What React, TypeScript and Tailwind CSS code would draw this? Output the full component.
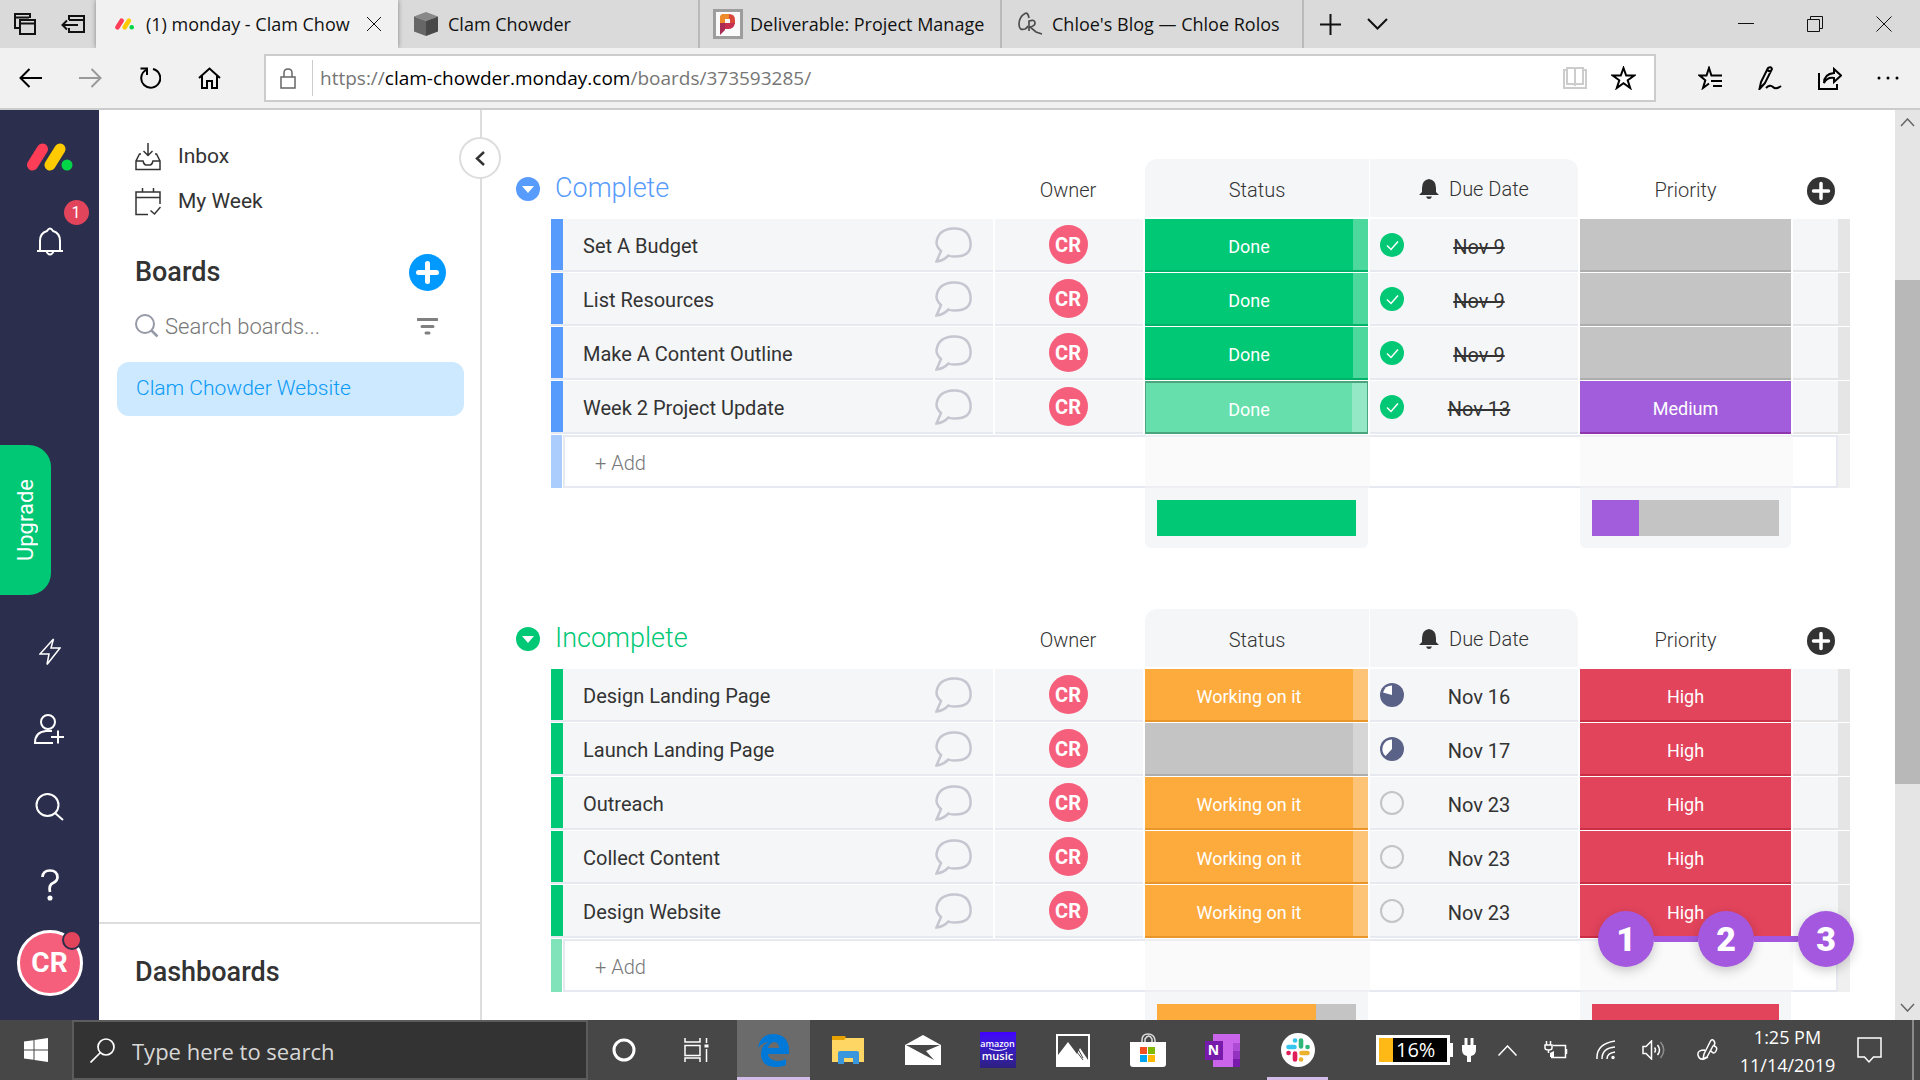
import React, { useState } from 'react'

interface Item {
  name: string
  status: string
  due: string
  progress: 'done' | 'late' | 'mid' | 'empty'
  priority: string
  selected?: boolean
}

interface Slice {
  color: string
  share: number
}

interface Group {
  title: string
  text: string
  strip: string
  fade: string
  items: Item[]
  statusBar: Slice[]
  priorityBar: Slice[]
}

const GROUPS: Group[] = [
  {
    title: 'Complete',
    text: 'text-[#579bfc]',
    strip: 'bg-[#579bfc]',
    fade: 'bg-[#abcdfd]',
    items: [
      { name: 'Set A Budget', status: 'Done', due: 'Nov 9', progress: 'done', priority: '' },
      { name: 'List Resources', status: 'Done', due: 'Nov 9', progress: 'done', priority: '' },
      { name: 'Make A Content Outline', status: 'Done', due: 'Nov 9', progress: 'done', priority: '' },
      { name: 'Week 2 Project Update', status: 'Done', due: 'Nov 13', progress: 'done', priority: 'Medium', selected: true },
    ],
    statusBar: [{ color: 'bg-[#00c875]', share: 100 }],
    priorityBar: [{ color: 'bg-[#a25ddc]', share: 25 }, { color: 'bg-[#c4c4c4]', share: 75 }],
  },
  {
    title: 'Incomplete',
    text: 'text-[#00c875]',
    strip: 'bg-[#00c875]',
    fade: 'bg-[#80e3ba]',
    items: [
      { name: 'Design Landing Page', status: 'Working on it', due: 'Nov 16', progress: 'late', priority: 'High' },
      { name: 'Launch Landing Page', status: '', due: 'Nov 17', progress: 'mid', priority: 'High' },
      { name: 'Outreach', status: 'Working on it', due: 'Nov 23', progress: 'empty', priority: 'High' },
      { name: 'Collect Content', status: 'Working on it', due: 'Nov 23', progress: 'empty', priority: 'High' },
      { name: 'Design Website', status: 'Working on it', due: 'Nov 23', progress: 'empty', priority: 'High' },
    ],
    statusBar: [{ color: 'bg-[#fdab3d]', share: 80 }, { color: 'bg-[#c4c4c4]', share: 20 }],
    priorityBar: [{ color: 'bg-[#e2445c]', share: 100 }],
  },
]

const CELL_COLORS: Record<string, string> = {
  Done: 'bg-[#00c875] border-[#00b368]',
  'Working on it': 'bg-[#fdab3d] border-[#e8962a]',
  High: 'bg-[#e2445c] border-[#cb2d45]',
  Medium: 'bg-[#a25ddc] border-[#8f35ae]',
  '': 'bg-[#c4c4c4] border-[#adadad]',
}

interface IconProps {
  w: number
  h: number
  sw?: number
  className?: string
  children: React.ReactNode
}

/* Line icon drawn on a grid of its own pixel size */
const Icon: React.FC<IconProps> = ({ w, h, sw = 2, className = '', children }) => (
  <svg width={w} height={h} viewBox={`0 0 ${w} ${h}`} fill="none" stroke="currentColor" strokeWidth={sw} className={`shrink-0 ${className}`} aria-hidden="true">
    {children}
  </svg>
)

const MondayMark: React.FC<{ w: number; h: number }> = ({ w, h }) => (
  <svg width={w} height={h} viewBox="0 0 46 28" className="shrink-0" aria-hidden="true">
    <path d="M6 22 16 6" stroke="#ff3d57" strokeWidth="11" strokeLinecap="round" />
    <path d="M23.500 22 33.500 6" stroke="#ffcb00" strokeWidth="11" strokeLinecap="round" />
    <circle cx="40.500" cy="22" r="5.500" fill="#00d647" />
  </svg>
)

/* ---------- Browser ---------- */

interface TabProps {
  title: string
  active?: boolean
  children: React.ReactNode
}

const Tab: React.FC<TabProps> = ({ title, active, children }) => (
  <div className={`flex items-center w-[302px] h-12 pl-3 ${active ? 'bg-[#f1f1f1] pr-4 shadow-[0_0_5px_rgba(0,0,0,0.4)]' : 'border-r-2 border-[#b9b9b9] pr-3'}`}>
    <span className="flex justify-center w-8 mr-1.5">{children}</span>
    <span className="flex-1 overflow-hidden whitespace-nowrap text-lg">{title}</span>
    {active && (
      <button aria-label="Close tab" className="pl-3">
        <Icon w={16} h={20} sw={1}><path d="M1 3l14 14M15 3L1 17" /></Icon>
      </button>
    )}
  </div>
)

const TabBar: React.FC = () => (
  <div className="flex h-12 items-center bg-[#dadada] text-[#111] overflow-hidden">
    <div className="flex items-center w-24 shrink-0 pl-[14px] gap-6">
      <button aria-label="Tabs you've set aside">
        <Icon w={23} h={23}>
          <path d="M5 15H1V1h15v4M1 4.500h14" />
          <path d="M6 7h15v14H6zM6 10.500h15" />
        </Icon>
      </button>
      <button aria-label="Set these tabs aside">
        <Icon w={24} h={20}>
          <path d="M8 6V2h15v16H8v-4M8 6h15" />
          <path d="M17 11H2M6 6.500 1.500 11 6 15.500" />
        </Icon>
      </button>
    </div>
    <Tab title="(1) monday - Clam Chow" active><MondayMark w={19} h={12} /></Tab>
    <Tab title="Clam Chowder">
      <svg width="24" height="24" viewBox="0 0 24 24" aria-hidden="true">
        <path d="M12 0 24 4.500 12 9 0 4.500z" fill="#888" />
        <path d="M0 4.500 12 9v15L0 19.500z" fill="#666" />
        <path d="M24 4.500 12 9v15l12-4.500z" fill="#484848" />
      </svg>
    </Tab>
    <Tab title="Deliverable: Project Manage">
      <svg width="30" height="30" viewBox="0 0 30 30" aria-hidden="true">
        <path d="M1.500 1.500h27v27h-27z" fill="#fafafa" stroke="#9d9d9d" strokeWidth="3" />
        <path d="M9 5h7v5h-4v4H7V7z" fill="#ee8c2c" />
        <path d="M16 5q6 0 6 6v4h-5v-5h-1z" fill="#d9473a" />
        <path d="M12 14h10q-1 6-7 6h-3z" fill="#c62f50" />
        <path d="M7 14h5v7l-5 5z" fill="#a92b53" />
      </svg>
    </Tab>
    <Tab title="Chloe's Blog — Chloe Rolos">
      <Icon w={25} h={25} sw={1.7} className="text-[#4d4d4d]">
        <path d="M11 6Q10 0 7 1.500 1 5 1 12t6 5q2-1 3-3" />
        <path d="M11 19V9q6-2 6 2 0 3-5 4l6 5 6 2" />
      </Icon>
    </Tab>
    <button aria-label="New tab" className="ml-4">
      <Icon w={21} h={21}><path d="M10.500 0v21M0 10.500h21" /></Icon>
    </button>
    <button aria-label="Tab previews" className="ml-[26px]">
      <Icon w={21} h={12}><path d="M1 1l9.500 9.500L20 1" /></Icon>
    </button>
    <div className="flex items-center gap-[53px] ml-auto pr-7">
      <button aria-label="Minimize"><Icon w={16} h={2} sw={1}><path d="M0 .5h16" /></Icon></button>
      <button aria-label="Restore"><Icon w={16} h={16} sw={1}><path d="M.5 3.500h12v12H.5zM3.500 3V.5h12v12h-3" /></Icon></button>
      <button aria-label="Close"><Icon w={16} h={16} sw={1}><path d="M.5.5l15 15M15.500.5l-15 15" /></Icon></button>
    </div>
  </div>
)

const AddressBar: React.FC = () => (
  <div className="flex items-center h-[62px] bg-[#f1f1f1] border-b-2 border-[#ccc] text-black">
    <div className="flex items-center shrink-0 w-[264px] pl-[19px] gap-[37px]">
      <button aria-label="Back"><Icon w={23} h={20}><path d="M23 10H1.500M10.500 1 1.500 10l9 9" /></Icon></button>
      <button aria-label="Forward" className="text-[#999]"><Icon w={23} h={20}><path d="M0 10h21.500M12.500 1l9 9-9 9" /></Icon></button>
      <button aria-label="Refresh"><Icon w={22} h={22}><path d="M14 2a9.500 9.500 0 1 1-7 1M1.500 1.500H8V8" /></Icon></button>
      <button aria-label="Home"><Icon w={23} h={22}><path d="M1 11 11.500 1.500 22 11M4 9v12h5v-7h5v7h5V9" /></Icon></button>
    </div>
    <div className="flex flex-1 items-center h-12 bg-white border-2 border-[#ccc]">
      <Icon w={16} h={21} sw={1.500} className="ml-[14px] text-[#666]"><path d="M1 9h14v11H1zM4 9V5q0-4 4-4t4 4v4" /></Icon>
      <span className="w-px h-9 mx-[7px] ml-4 bg-[#ccc]" />
      <a href="#board" className="flex-1 text-[19px] text-[#767676]">
        https://<span className="text-black">clam-chowder.monday.com</span>/boards/373593285/
      </a>
      <button aria-label="Reading view" className="text-[#ccc]">
        <Icon w={24} h={22}><path d="M4 3H1v18h22V3h-3M4 1h7l1 1 1-1h7v16h-7l-1 1-1-1H4zM12 2v16" /></Icon>
      </button>
      <button aria-label="Add to favorites" className="ml-6 mr-[18px]">
        <Icon w={25} h={24}><path d="M12.500 2l2.700 7.600h8l-6.500 4.700 2.500 7.700-6.700-4.800L5.800 22l2.500-7.700L1.800 9.600h8z" /></Icon>
      </button>
    </div>
    <div className="flex items-center shrink-0 w-[264px] pl-[42px] gap-[35px]">
      <button aria-label="Favorites">
        <Icon w={25} h={24}><path d="M17 9.600h-3.600L11 2 8.500 9.600H1.800l5.500 4.700L5 22l6-4.500M14 9.600h10M13 15h11M15 20h9" /></Icon>
      </button>
      <button aria-label="Notes">
        <Icon w={25} h={24}><path d="M1.500 23 3 16 10 2q3-2 4 1L7 17zM9 4l4 2M1.500 23 7 17M8 22q4-4 7-1t8-1" /></Icon>
      </button>
      <button aria-label="Share">
        <Icon w={24} h={23}><path d="M1 6v16h18v-5M16 2l7 6.500-7 6.500v-4q-7-1-10 5 0-9 10-10z" /></Icon>
      </button>
      <button aria-label="Settings and more">
        <Icon w={22} h={4} className="fill-current stroke-none"><circle cx="2" cy="2" r="1.500" /><circle cx="11" cy="2" r="1.500" /><circle cx="20" cy="2" r="1.500" /></Icon>
      </button>
    </div>
  </div>
)

/* ---------- monday.com side panels ---------- */

const Rail: React.FC = () => (
  <nav className="relative flex flex-col items-center shrink-0 w-[99px] pt-[33px] pb-6 bg-[#2b2e4c] text-white">
    <MondayMark w={47} h={28} />
    <button aria-label="Notifications" className="relative mt-14">
      <Icon w={28} h={29}><path d="M1 24h26M4 24V14Q4 6 11 4q3-5 6 0 7 2 7 10v10M10.500 25q3.500 5 7 0" /></Icon>
      <span className="absolute left-7 -top-[27px] w-[25px] h-[25px] rounded-full bg-[#e2445c] text-base leading-[26px] text-center">1</span>
    </button>
    <button className="absolute left-0 top-[335px] flex items-center justify-center w-[51px] h-[150px] rounded-r-[22px] bg-[#00c875]">
      <span className="[writing-mode:vertical-rl] rotate-180 text-[22px]">Upgrade</span>
    </button>
    <div className="flex flex-col items-center mt-auto">
      <button aria-label="What's new"><Icon w={22} h={28} sw={1.500}><path d="M14.500 1 1 16h9L8 26.500 21 10h-9z" /></Icon></button>
      <button aria-label="Invite members" className="mt-12">
        <Icon w={31} h={31}><circle cx="14" cy="8" r="7" /><path d="M19 29H1q0-11 11-12h6M17 23h13M24 16.500v13" /></Icon>
      </button>
      <button aria-label="Search" className="mt-12"><Icon w={29} h={28}><circle cx="12.500" cy="12" r="11" /><path d="M20 20l8 7" /></Icon></button>
      <button aria-label="Help" className="mt-12">
        <Icon w={18} h={32} sw={2.700}><path d="M1.500 8Q2 1.500 9 1.500t7.500 6.500Q16.500 12 12 14t-3 9" /><circle cx="9" cy="29" r="1.200" /></Icon>
      </button>
      <button aria-label="Profile" className="relative mt-[29px] w-[66px] h-[66px] rounded-full border-[3px] border-white bg-[#f65f7c] text-[28px] font-bold">
        CR
        <span className="absolute -top-[3px] -right-[2px] w-5 h-5 rounded-full border-2 border-[#2b2e4c] bg-[#e2445c]" />
      </button>
    </div>
  </nav>
)

const SideBar: React.FC = () => (
  <aside className="relative flex flex-col shrink-0 w-[383px] bg-white border-r-2 border-[#ddd] text-[#333]">
    <div className="flex flex-col pl-9 pt-6 text-[21px]">
      <a href="#inbox" className="flex items-center h-[45px] gap-[17px]">
        <Icon w={26} h={28} sw={1.500}>
          <path d="M6 11H4.500L1 18v8.500h24V18l-3.500-7H20M1 18h7q1 4 3 4h4q2 0 3-4h7M13 0v12M8.500 8l4.500 4.500L17.500 8" />
        </Icon>
        Inbox
      </a>
      <a href="#week" className="flex items-center h-[45px] gap-[17px]">
        <Icon w={26} h={28} sw={1.500}>
          <path d="M13 26.500H1V4h24v12M1 9.500h24M7.500 0v4M18.500 0v4M15.500 22.500l4 3.500 6-7" />
        </Icon>
        My Week
      </a>
    </div>
    <div className="flex items-center justify-between h-10 mt-[28px] pl-9 pr-[34px]">
      <h2 className="text-[27px] font-medium">Boards</h2>
      <button aria-label="Add board" className="text-white">
        <Icon w={37} h={37} sw={5}><circle cx="18.500" cy="18.500" r="18.500" fill="#09f" stroke="none" /><path d="M18.500 9.500v18M9.500 18.500h18" strokeLinecap="round" /></Icon>
      </button>
    </div>
    <label className="flex items-center h-9 mt-4 pl-9 pr-[42px]">
      <Icon w={24} h={24} className="mr-1.5 text-[#9699a6]"><circle cx="10" cy="10" r="9" /><path d="M16 16l6.500 6.500" strokeWidth="2.500" /></Icon>
      <input type="text" aria-label="Search boards" placeholder="Search boards..." className="flex-1 min-w-0 text-[22px] font-light placeholder:text-[#777] outline-none" />
      <Icon w={21} h={17} sw={3} className="text-[#808080]"><path d="M1 1.500h19M5 8.500h11M9 15h3" strokeLinecap="round" /></Icon>
    </label>
    <a href="#board" className="flex items-center h-[54px] mt-[18px] ml-[18px] mr-4 px-[19px] rounded-xl bg-[#cce9ff] text-[21px] font-light text-[#0a99f5]">
      Clam Chowder Website
    </a>
    <div className="flex items-center h-[98px] mt-auto pl-9 border-t-2 border-[#ddd]">
      <h2 className="text-[27px] font-medium">Dashboards</h2>
    </div>
    <button aria-label="Collapse panel" className="absolute z-10 -right-[21px] top-[27px] flex items-center justify-center w-[42px] h-[42px] rounded-full border-2 border-[#ddd] bg-white">
      <Icon w={10} h={15} sw={2.500}><path d="M9 1 2 7.500 9 14" /></Icon>
    </button>
  </aside>
)

/* ---------- Board ---------- */

const ProgressMark: React.FC<{ kind: Item['progress'] }> = ({ kind }) => (
  <svg width="24" height="24" viewBox="0 0 24 24" fill="none" className="shrink-0" aria-hidden="true">
    {kind === 'done' && (
      <>
        <circle cx="12" cy="12" r="12" fill="#00c875" />
        <path d="M7 12.500l4 4 7-8" stroke="#fff" strokeWidth="1.500" />
      </>
    )}
    {kind === 'late' && (
      <>
        <circle cx="12" cy="12" r="12" fill="#5b6287" />
        <path d="M12 12V2.500A9.500 9.500 0 0 0 3 9.500z" fill="#fff" />
      </>
    )}
    {kind === 'mid' && (
      <>
        <circle cx="12" cy="12" r="12" fill="#5b6287" />
        <path d="M12 12V2.500A9.500 9.500 0 0 0 5.500 19z" fill="#fff" />
      </>
    )}
    {kind === 'empty' && <circle cx="12" cy="12" r="11" stroke="#c4c4c4" strokeWidth="2" />}
  </svg>
)

const StatusCell: React.FC<{ item: Item }> = ({ item }) => (
  <div className={`flex h-[53px] text-lg text-white ${item.selected ? 'border-2 border-x border-[#4aa57e] bg-[#66dfac]' : `border-b-2 ${CELL_COLORS[item.status]}`}`}>
    <span className="flex flex-1 items-center justify-center pt-1">{item.status}</span>
    <span className="w-[15px] bg-white/30" />
  </div>
)

const ItemRow: React.FC<{ item: Item; strip: string }> = ({ item, strip }) => (
  <tr>
    <td />
    <td className="pr-[2px] pb-px">
      <div className="flex items-center h-[53px] bg-[#f5f6f8] border-b-2 border-[#e6e9ef]">
        <span className={`w-3 h-full mr-5 ${strip}`} />
        <span className="flex-1 pt-[2px]">{item.name}</span>
        <button aria-label={`Updates for ${item.name}`} className="mr-[21px] text-[#c5c7d0]">
          <Icon w={37} h={36} sw={2.500}><path d="M1.500 34.500 6 24Q1.500 20 1.500 15.500 3 2 18.500 1.500T35.500 15.500 18.500 29.500q-3 0-5-1Q8 34 1.500 34.500z" /></Icon>
        </button>
      </div>
    </td>
    <td className="pr-[2px] pb-px">
      <div className="flex items-center justify-center h-[53px] pr-[2px] bg-[#f5f6f8] border-b-2 border-[#e6e9ef]">
        <span className="w-[39px] h-[39px] rounded-full bg-[#f65f7c] text-center text-xl font-bold leading-10 text-white">CR</span>
      </div>
    </td>
    <td className="pr-[2px] pb-px"><StatusCell item={item} /></td>
    <td className="pr-[2px] pb-px">
      <div className="flex items-center h-[53px] pl-[10px] bg-[#f5f6f8] border-b-2 border-[#e6e9ef]">
        <ProgressMark kind={item.progress} />
        <span className="flex-1 pr-6 pt-1 text-center">
          {item.progress === 'done' ? <s className="decoration-2">{item.due}</s> : item.due}
        </span>
      </div>
    </td>
    <td className="pr-[2px] pb-px">
      <div className={`flex items-center justify-center h-[53px] pt-1 border-b-2 text-lg text-white ${CELL_COLORS[item.priority]}`}>{item.priority}</div>
    </td>
    <td className="pb-px"><div className="h-[53px] bg-[#f5f6f8] border-b-2 border-[#e5e5e5]" /></td>
    <td className="pb-px"><div className="h-[53px] bg-[#e5e5e5]" /></td>
  </tr>
)

const SummaryBar: React.FC<{ slices: Slice[] }> = ({ slices }) => (
  <div className="h-[60px] p-3 rounded-b-md bg-[#f5f6f8]">
    <div className="flex h-9">
      {slices.map((slice) => (
        <span key={slice.color} className={slice.color} style={{ width: `${slice.share}%` }} />
      ))}
    </div>
  </div>
)

const GroupTable: React.FC<{ group: Group }> = ({ group }) => {
  const [draft, setDraft] = useState('')

  return (
    <table className="table-fixed w-full mb-[61px] border-separate border-spacing-0 text-xl text-[#333]">
      <colgroup>
        <col className="w-[35px]" />
        <col />
        <col className="w-[150px]" />
        <col className="w-[225px]" />
        <col className="w-[210px]" />
        <col className="w-[213px]" />
        <col className="w-[45px]" />
        <col className="w-3" />
      </colgroup>
      <thead>
        <tr className="h-[60px] font-light">
          <th colSpan={2} className="p-0 text-left font-light">
            <div className={`flex items-center gap-[15px] text-[27px] ${group.text}`}>
              <button aria-label={`Collapse ${group.title}`}>
                <Icon w={24} h={24} className="fill-current stroke-none">
                  <circle cx="12" cy="12" r="12" />
                  <path d="M6 9h12l-6 7z" fill="#fff" />
                </Icon>
              </button>
              {group.title}
            </div>
          </th>
          <th className="p-0 pt-[2px] pr-1 font-light">Owner</th>
          <th className="p-0 pb-[2px] font-light"><div className="h-[58px] pt-[2px] rounded-tl-xl border-r border-white bg-[#f5f6f8] leading-[58px]">Status</div></th>
          <th className="p-0 pr-[2px] pb-[2px] font-light">
            <div className="flex items-center justify-center gap-[10px] h-[58px] pt-[2px] rounded-tr-xl bg-[#f5f6f8]">
              <Icon w={20} h={20} className="fill-current stroke-none">
                <path d="M10 0q7 1 7 9v4l3 3H0l3-3V9q0-8 7-9zM7 17.500h6q-1 2.500-3 2.500t-3-2.500z" />
              </Icon>
              Due Date
            </div>
          </th>
          <th className="p-0 pt-[2px] pr-[2px] font-light">Priority</th>
          <th colSpan={2} className="p-0 pt-1 text-left">
            <button aria-label="Add column" className="block ml-[14px]">
              <Icon w={28} h={28} sw={3.500}><circle cx="14" cy="14" r="14" fill="#333" stroke="none" /><path d="M14 6.500v15M6.500 14h15" stroke="#fff" strokeLinecap="round" /></Icon>
            </button>
          </th>
        </tr>
      </thead>
      <tbody>
        {group.items.map((item) => (
          <ItemRow key={item.name} item={item} strip={group.strip} />
        ))}
        <tr>
          <td />
          <td className="p-0">
            <div className="flex h-[53px]">
              <span className={`w-[11px] mr-px ${group.fade}`} />
              <input
                type="text"
                aria-label={`Add item to ${group.title}`}
                placeholder="+ Add"
                value={draft}
                onChange={(e) => setDraft(e.target.value)}
                className="flex-1 min-w-0 pt-[2px] pl-[30px] border-2 border-r-0 border-[#e6e9ef] font-light placeholder:text-[#777] outline-none"
              />
            </div>
          </td>
          <td className="p-0"><div className="h-[53px] border-y-2 border-[#e6e9ef]" /></td>
          <td className="p-0"><div className="h-[53px] border-y-2 border-[#eeeff2] bg-[#fafafa]" /></td>
          <td className="p-0"><div className="h-[53px] border-y-2 border-[#e6e9ef]" /></td>
          <td className="p-0"><div className="h-[53px] border-y-2 border-[#eeeff2] bg-[#fafafa]" /></td>
          <td className="p-0"><div className="h-[53px] border-y-2 border-r-2 border-[#e6e9ef]" /></td>
          <td className="p-0"><div className="h-[53px] bg-[#f0f0f0]" /></td>
        </tr>
      </tbody>
      <tfoot>
        <tr>
          <td colSpan={3} />
          <td className="pr-[2px]"><SummaryBar slices={group.statusBar} /></td>
          <td />
          <td className="pr-[2px]"><SummaryBar slices={group.priorityBar} /></td>
          <td colSpan={2} />
        </tr>
      </tfoot>
    </table>
  )
}

const Steps: React.FC = () => (
  <div className="absolute right-[41px] bottom-[53px] flex items-center text-[34px] font-black text-white">
    {[1, 2, 3].map((step) => (
      <React.Fragment key={step}>
        {step > 1 && <span className="w-11 h-1.5 bg-[#a358df]" />}
        <button className="w-14 h-14 rounded-full bg-[#a358df] shadow-[0_4px_12px_rgba(0,0,0,0.2)]">{step}</button>
      </React.Fragment>
    ))}
  </div>
)

const ScrollBar: React.FC = () => (
  <div className="flex flex-col items-center shrink-0 w-[25px] h-full bg-[#e5e5e5] text-[#666]">
    <Icon w={15} h={9} sw={1.500} className="mt-2"><path d="M1 8l6.500-7L14 8" /></Icon>
    <div className="grow-[153]" />
    <div className="w-full grow-[504] bg-[#b8b8b8]" />
    <div className="grow-[219]" />
    <Icon w={15} h={9} sw={1.500} className="mb-2"><path d="M1 1l6.500 7L14 1" /></Icon>
  </div>
)

/* ---------- Windows taskbar ---------- */

const TaskIcon: React.FC<{ label: string; mode?: 'active' | 'open'; children: React.ReactNode }> = ({ label, mode, children }) => (
  <button
    aria-label={label}
    className={`relative flex items-center justify-center h-full ${mode === 'active' ? 'w-[73px] bg-[#6b6b6b]' : 'w-[75px]'}`}
  >
    {children}
    {mode && <span className={`absolute bottom-0 h-[3px] bg-[#d4bce8] ${mode === 'active' ? 'inset-x-0' : 'inset-x-[7px]'}`} />}
  </button>
)

const TaskBar: React.FC = () => (
  <footer className="flex items-center shrink-0 h-[60px] bg-[#474747] text-white font-['Open_Sans','Noto_Sans',sans-serif]">
    <button aria-label="Start" className="flex justify-center shrink-0 w-[72px]">
      <svg width="24" height="24" viewBox="0 0 24 24" fill="#fff" aria-hidden="true">
        <path d="M0 3.500l9.500-1.300v9.300H0zM10.500 2 24 0v11.500H10.500zM0 12.500h9.500v9.300L0 20.500zM10.500 12.500H24V24l-13.500-2z" />
      </svg>
    </button>
    <label className="flex items-center shrink-0 w-[516px] h-full pl-4 border-2 border-[#5c5c5c] bg-[#333]">
      <Icon w={25} h={25} sw={1.700}><circle cx="16" cy="9" r="8" /><path d="M10.500 14.500.5 24.500" /></Icon>
      <input type="text" aria-label="Search" placeholder="Type here to search" className="flex-1 ml-[17px] pt-[2px] text-[22px] placeholder:text-[#d8d8d8] outline-none" />
    </label>
    <button aria-label="Cortana" className="flex justify-center w-[72px]">
      <Icon w={24} h={24} sw={3}><circle cx="12" cy="12" r="10" /></Icon>
    </button>
    <button aria-label="Task view" className="flex justify-center w-[77px] pr-1">
      <Icon w={25} h={24} sw={1.500}><path d="M1 0v4h15V0M1 7.500h15v10H1zM1 24v-4h15v4M22.500 0v5M22.500 11v13" /><path d="M20.500 6.500h4v3h-4z" fill="#fff" stroke="none" /></Icon>
    </button>
    <TaskIcon label="Edge" mode="active">
      <svg width="31" height="33" viewBox="0 0 31 33" aria-hidden="true">
        <path d="M0 14Q2 0 16 0q14 1 15 15v5H10q1 7 10 7 5 0 8-2v6q-4 2-11 2Q3 32 3 20 3 11 11 8 4 8 0 14zM10 14h11q0-6-5-6-5 1-6 6z" fill="#0078d7" fillRule="evenodd" />
      </svg>
    </TaskIcon>
    <TaskIcon label="File Explorer">
      <svg width="32" height="28" viewBox="0 0 32 28" aria-hidden="true">
        <path d="M0 0h13l2 4H0z" fill="#e8a200" />
        <path d="M0 4h12l2-2h18v24H0z" fill="#fdd663" />
        <path d="M6 28V17q0-2 2-2h17q2 0 2 2v11h-6v-6h-9v6z" fill="#3a96dd" />
      </svg>
    </TaskIcon>
    <TaskIcon label="Mail">
      <svg width="36" height="30" viewBox="0 0 36 30" aria-hidden="true">
        <path d="M0 10 18 0l18 10v20H0z" fill="#fff" />
        <path d="M1 10h34L21 16l8 9-17-9z" fill="#474747" />
      </svg>
    </TaskIcon>
    <TaskIcon label="Amazon Music">
      <span className="relative flex flex-col items-center justify-center w-9 h-9 bg-linear-to-b from-[#4100ff] to-[#2e1f80] text-[9px] font-semibold leading-3">
        amazon
        <svg width="18" height="3" viewBox="0 0 18 3" className="absolute top-[16px]" aria-hidden="true"><path d="M0 .5q9 4 18 0" fill="none" stroke="#fff" /></svg>
        <span className="text-[11px]">music</span>
      </span>
    </TaskIcon>
    <TaskIcon label="Photos">
      <svg width="34" height="33" viewBox="0 0 34 33" aria-hidden="true">
        <path d="M1 1h32v31H1z" fill="#474747" stroke="#fff" strokeWidth="2" />
        <path d="M2 21 12 8l9 12 3-6 8 12v6H2z" fill="#fff" />
        <path d="M21 18l6 8M22 15l5 9" stroke="#474747" />
      </svg>
    </TaskIcon>
    <TaskIcon label="Microsoft Store">
      <svg width="36" height="34" viewBox="0 0 36 34" aria-hidden="true">
        <path d="M12 10V7q0-6 6-6t7 6v3M15 10V6q4-6 7 0v4" fill="none" stroke="#ddd" strokeWidth="1.500" />
        <path d="M0 9h36v22q0 3-3 3H3q-3 0-3-3z" fill="#fff" />
        <path d="M10 14h7v7h-7z" fill="#f25022" />
        <path d="M18 14h7v7h-7z" fill="#7fba00" />
        <path d="M10 22h7v7h-7z" fill="#00a4ef" />
        <path d="M18 22h7v7h-7z" fill="#ffb900" />
      </svg>
    </TaskIcon>
    <TaskIcon label="OneNote">
      <span className="relative flex items-center w-9 h-[33px]">
        <svg width="36" height="33" viewBox="0 0 36 33" className="absolute inset-0" aria-hidden="true">
          <path d="M8 0h27v33H8z" fill="#ca64ea" />
          <path d="M28 9h7v8h-7z" fill="#ae4bd5" />
          <path d="M28 17h7v8h-7z" fill="#9332bf" />
          <path d="M28 25h7v8h-7z" fill="#7719aa" />
          <path d="M0 7h18v19H0z" fill="#7719aa" />
        </svg>
        <b className="relative w-[18px] text-center text-sm">N</b>
      </span>
    </TaskIcon>
    <TaskIcon label="Slack" mode="open">
      <svg width="34" height="34" viewBox="0 0 34 34" fill="none" strokeWidth="4.600" strokeLinecap="round" aria-hidden="true">
        <circle cx="17" cy="17" r="17" fill="#fff" stroke="none" />
        <path d="M7.500 14h6M14 7.500h.1" stroke="#36c5f0" />
        <path d="M20 7.500v6M26.500 14h.1" stroke="#2eb67d" />
        <path d="M26.500 20h-6M20 26.500h.1" stroke="#ecb22e" />
        <path d="M14 26.500v-6M7.500 20h.1" stroke="#e01e5a" />
      </svg>
    </TaskIcon>
    <div className="flex items-center ml-auto h-full">
      <div className="flex items-center h-[30px] w-[74px] border-[3px] border-white bg-black">
        <span className="w-[14px] h-full bg-[#ffb917]" />
        <span className="pl-[3px] text-xl leading-6">16%</span>
      </div>
      <span className="w-[3px] h-[14px] bg-white" />
      <svg width="14" height="24" viewBox="0 0 14 24" fill="#fff" className="ml-[9px]" aria-hidden="true">
        <path d="M2.500 0h3v7h3V0h3v7H14v5q0 5-5 6v6H5v-6q-5-1-5-6V7h2.500z" />
      </svg>
      <button aria-label="Show hidden icons" className="ml-[22px]"><Icon w={19} h={11} sw={1.500}><path d="M.5 10.500l9-9.500 9 9.500" /></Icon></button>
      <Icon w={24} h={18} sw={1.500} className="ml-[27px]">
        <path d="M7 16.500h14.500v-12H9M22.500 8v5M2.500 0v4M6.500 0v4M1 4h7v3q0 2-3.500 2T1 7zM4.500 9v3" />
        <path d="M6 16v-4l4-2v6z" fill="#fff" stroke="none" />
      </Icon>
      <Icon w={20} h={20} sw={1.500} className="ml-7">
        <path d="M1 19Q0 4 19 1M6 19q0-11 13-12M11 19q0-6 8-7" />
        <circle cx="17" cy="17.500" r="1" />
      </Icon>
      <Icon w={23} h={20} sw={1.500} className="ml-[26px]">
        <path d="M1 6.500h3L9.500 1v18L4 13.500H1zM12.500 7.500q2 2.500 0 5M15.500 5q4 5 0 10" />
        <path d="M18.500 2q6.500 8 0 16" stroke="#8c8c8c" />
      </Icon>
      <Icon w={21} h={22} sw={1.500} className="ml-8">
        <path d="M7 15 13 3q2-4 4-1t-1 5l-6 11-4 2zM8 11q-8 0-7 5t6 4l4-2M17 7q4 1 2 5t-5 0" />
      </Icon>
      <time className="w-[139px] pt-[2px] text-center text-lg leading-7">
        1:25 PM<br />11/14/2019
      </time>
      <button aria-label="Notifications"><Icon w={25} h={27} sw={1.500}><path d="M1 1h23v19h-7.500l-4.500 5-4.500-5H1z" /></Icon></button>
      <span className="w-[2px] h-full ml-[30px] mr-[6px] bg-[#8a8a8a]" />
    </div>
  </footer>
)

const App: React.FC = () => (
  <div className="flex flex-col h-screen overflow-hidden bg-white font-[Roboto,sans-serif]">
    <header className="shrink-0 font-['Open_Sans','Noto_Sans',sans-serif]">
      <TabBar />
      <AddressBar />
    </header>
    <div className="flex flex-1 min-h-0">
      <Rail />
      <SideBar />
      <main id="board" className="relative flex-1 min-w-0 overflow-hidden pt-[49px] pl-[34px] pr-[45px]">
        {GROUPS.map((group) => (
          <GroupTable key={group.title} group={group} />
        ))}
        <Steps />
      </main>
      <ScrollBar />
    </div>
    <TaskBar />
  </div>
)

export default App
